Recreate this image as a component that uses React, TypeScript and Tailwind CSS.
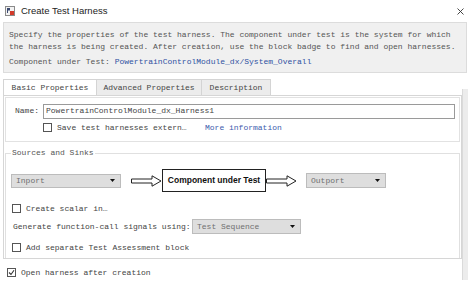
const mono = "font-['Liberation_Mono',monospace]";

function Box({ checked = false }: { checked?: boolean }) {
  return (
    <span className="w-[9px] h-[9px] border border-[#555] bg-white flex items-center justify-center shrink-0">
      {checked && (
        <svg width="7" height="7" viewBox="0 0 7 7">
          <path d="M1 3.5 L3 5.5 L6 1.2" fill="none" stroke="#333" strokeWidth="1.1" />
        </svg>
      )}
    </span>
  );
}

function Drop({ label, w, h = 14 }: { label: string; w: number; h?: number }) {
  return (
    <div
      className="bg-[#dedede] border border-[#bcbcbc] text-[#707070] flex items-center justify-between pl-[4px] pr-[5px]"
      style={{ width: w, height: h }}
    >
      <span>{label}</span>
      <svg width="5" height="3" viewBox="0 0 5 3">
        <path d="M0 0 H5 L2.5 3 Z" fill="#111" />
      </svg>
    </div>
  );
}

function Arrow() {
  return (
    <svg width="31" height="12" viewBox="0 0 31 12" className="shrink-0">
      <path d="M0.5 4 H21 V0.8 L30 6 L21 11.2 V8 H0.5 Z" fill="white" stroke="#222" strokeWidth="1" />
    </svg>
  );
}

export default function App() {
  return (
    <div className={`w-[474px] h-[287px] bg-white flex flex-col overflow-hidden text-[8px] text-[#444] ${mono}`}>
      {/* title bar */}
      <div className="h-[22px] flex items-center pl-[5px] pr-[10px] shrink-0">
        <svg width="10" height="10" viewBox="0 0 10 10">
          <rect x="0.5" y="0.5" width="9" height="9" fill="#f2f2f2" stroke="#8a8a8a" />
          <path d="M2 2 H5 V4.5 H3 V7 H2 Z" fill="#3b4a70" />
          <rect x="5" y="5" width="4" height="4" fill="#d23a2a" />
        </svg>
        <span className="ml-[6px] font-['Liberation_Sans',sans-serif] text-[9.5px] text-[#222]">Create Test Harness</span>
        <svg width="7" height="7" viewBox="0 0 7 7" className="ml-auto">
          <path d="M0.5 0.5 L6.5 6.5 M6.5 0.5 L0.5 6.5" stroke="#333" strokeWidth="0.9" />
        </svg>
      </div>

      {/* description */}
      <div className="ml-[3px] mr-[7px] h-[51px] shrink-0 bg-[#f0f0f0] border border-[#dcdcdc] pl-[5px] pt-[6px] leading-[11.5px] text-[#555]">
        <p>Specify the properties of the test harness. The component under test is the system for which</p>
        <p>the harness is being created. After creation, use the block badge to find and open harnesses.</p>
        <p className="mt-[4px]">
          Component under Test: <span className="text-[#2f50a2]">PowertrainControlModule_dx/System_Overall</span>
        </p>
      </div>

      {/* body */}
      <div className="flex mt-[6px] flex-1">
        <div className="w-[459px] ml-[3px] flex flex-col">
          {/* tabs */}
          <div className="flex h-[16px] shrink-0 text-[#444]">
            <div className="w-[94px] bg-white border border-b-0 border-[#d4d4d4] flex items-center justify-center">Basic Properties</div>
            <div className="w-[105px] bg-[#ececec] border-t border-r border-[#d4d4d4] flex items-center justify-center">Advanced Properties</div>
            <div className="w-[69px] bg-[#ececec] border-t border-r border-[#d4d4d4] flex items-center justify-center">Description</div>
          </div>

          {/* panel */}
          <div className="h-[164px] shrink-0 border border-[#d6d6d6] flex flex-col">
            <div className="mx-[1px] mt-[1px] h-[45px] border border-[#e2e2e2] flex flex-col">
              <div className="flex items-center h-[14px] mt-[6px] pl-[9px]">
                <span className="w-[28px]">Name:</span>
                <div className="w-[412px] h-[15px] border border-[#9a9a9a] flex items-center pl-[2px] text-[#444]">
                  PowertrainControlModule_dx_Harness1
                </div>
              </div>
              <div className="flex items-center mt-[5px] pl-[37px] h-[9px]">
                <Box />
                <span className="ml-[5px] w-[148px]">Save test harnesses extern…</span>
                <span className="text-[#3d5cae]">More information</span>
              </div>
            </div>

            <fieldset className="mx-[1px] mt-[6px] flex-1 border border-b-0 border-[#e0e0e0]">
              <legend className="ml-[5px] px-[1px] leading-[10px] text-[#555]">Sources and Sinks</legend>
              <div className="flex items-center h-[23px] mt-[11px] pl-[5px]">
                <Drop label="Inport" w={110} />
                <div className="ml-[10px]">
                  <Arrow />
                </div>
                <div className="w-[104px] h-[23px] border border-[#222] flex items-center justify-center font-['Liberation_Sans',sans-serif] font-bold text-[8.5px] text-[#111]">
                  Component under Test
                </div>
                <Arrow />
                <div className="ml-[9px]">
                  <Drop label="Outport" w={80} h={15} />
                </div>
              </div>
              <div className="flex items-center h-[9px] mt-[12px] pl-[6px]">
                <Box />
                <span className="ml-[5px]">Create scalar in…</span>
              </div>
              <div className="flex items-center h-[15px] mt-[6px] pl-[7px]">
                <span className="w-[179px]">Generate function-call signals using:</span>
                <Drop label="Test Sequence" w={109} h={15} />
              </div>
              <div className="flex items-center h-[9px] mt-[9px] pl-[6px]">
                <Box />
                <span className="ml-[5px]">Add separate Test Assessment block</span>
              </div>
            </fieldset>
          </div>

          <div className="flex items-center h-[9px] mt-[9px] pl-[4px]">
            <Box checked />
            <span className="ml-[5px]">Open harness after creation</span>
          </div>
        </div>
        <div className="w-[6px] bg-[#ececec] border-l border-[#dadada] mt-[10px] mb-[7px]" />
      </div>
    </div>
  );
}
